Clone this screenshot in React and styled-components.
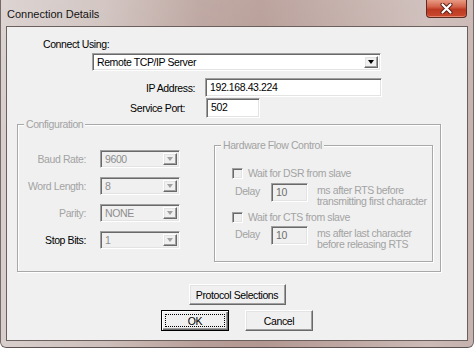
import React from 'react';
import styled, { createGlobalStyle, css } from 'styled-components';

const GlobalStyle = createGlobalStyle`
  html, body {
    margin: 0;
    padding: 0;
    background: #ffffff;
  }
  body {
    width: 474px;
    height: 348px;
    overflow: hidden;
    font-family: "Liberation Sans", Arial, sans-serif;
  }
`;

const sunken = css`
  box-sizing: border-box;
  border: 1px solid;
  border-color: #a0a0a0 #ffffff #ffffff #a0a0a0;
  box-shadow: inset 1px 1px 0 #696969, inset -1px -1px 0 #e3e3e3;
`;

const raised = css`
  box-sizing: border-box;
  background: #f0f0f0;
  border: 1px solid;
  border-color: #ffffff #696969 #696969 #ffffff;
  box-shadow: inset -1px -1px 0 #a0a0a0, inset 1px 1px 0 #e3e3e3;
`;

const Window = styled.div`
  width: 474px;
  height: 348px;
  box-sizing: border-box;
  display: flex;
  flex-direction: column;
  border-radius: 0 0 6px 6px;
  background:
    linear-gradient(180deg, rgba(255,255,255,0.12) 0%, rgba(0,0,0,0) 40%),
    linear-gradient(90deg, #d8cfcd 0%, #cdbfbb 22%, #b89f99 42%, #b39791 55%, #c0aaa5 75%, #cbbab6 90%, #c6b2ae 100%);
  box-shadow: inset 1px 0 0 #766967, inset -1px 0 0 #766967, inset 0 -1px 0 #5c5050;
`;

const TitleBar = styled.div`
  flex: none;
  height: 26px;
  display: flex;
  justify-content: space-between;
  align-items: flex-start;
  padding-left: 7px;
`;

const Title = styled.span`
  margin-top: 7px;
  font-size: 11px;
  line-height: 14px;
  color: #141414;
`;

const CloseButton = styled.div`
  width: 41px;
  height: 18px;
  margin-right: 7px;
  box-sizing: border-box;
  display: flex;
  align-items: center;
  justify-content: center;
  border: 1px solid #5f2a20;
  border-top: none;
  border-radius: 0 0 4px 4px;
  background: linear-gradient(180deg, #e89a84 0%, #d4634a 40%, #bd3a22 55%, #c9482d 100%);
  box-shadow: inset 0 -1px 0 rgba(255,190,170,0.5);
`;

const Client = styled.div`
  flex: none;
  height: 315px;
  margin: 0 6px;
  box-sizing: border-box;
  border: 1px solid #6b605e;
  background: #f0f0f0;
  display: flex;
  flex-direction: column;
  font-size: 10.5px;
  letter-spacing: -0.4px;
  color: #000;
`;

const Text = styled.span`
  line-height: 14px;
  white-space: nowrap;
  color: ${(p) => (p.$disabled ? '#a3a3a3' : '#000')};
`;

const ConnectLabel = styled(Text)`
  margin: 10px 0 0 36px;
`;

const Dropdown = styled.div`
  ${sunken};
  margin: 2px 0 0 85px;
  width: 289px;
  height: 18px;
  background: #ffffff;
  display: flex;
  align-items: stretch;
  padding: 2px;
`;

const DropValue = styled.span`
  flex: 1;
  padding-left: 2px;
  line-height: 13px;
  color: ${(p) => (p.$disabled ? '#8e8e8e' : '#000')};
`;

const ArrowButton = styled.div`
  ${raised};
  width: 14px;
  display: flex;
  align-items: center;
  justify-content: center;
`;

const Arrow = styled.div`
  width: 0;
  height: 0;
  border-left: 3.5px solid transparent;
  border-right: 3.5px solid transparent;
  border-top: 4px solid ${(p) => (p.$disabled ? '#a0a0a0' : '#000')};
`;

const FieldRow = styled.div`
  display: flex;
  align-items: center;
  margin-top: ${(p) => p.$top}px;
`;

const RowLabel = styled(Text)`
  flex: none;
  width: ${(p) => p.$width}px;
  margin-right: ${(p) => p.$gap}px;
  text-align: right;
`;

const TextBox = styled.div`
  ${sunken};
  width: ${(p) => p.$width}px;
  height: ${(p) => p.$height}px;
  background: ${(p) => (p.$disabled ? '#f0f0f0' : '#ffffff')};
  color: ${(p) => (p.$disabled ? '#6e6e6e' : '#000')};
  padding: 2px 0 0 4px;
  line-height: 13px;
  flex: none;
`;

const Group = styled.div`
  position: relative;
  box-sizing: border-box;
  flex: none;
  width: ${(p) => p.$width}px;
  height: ${(p) => p.$height}px;
  border: 1px solid #a8a8a8;
  box-shadow: 1px 1px 0 #ffffff, inset 1px 1px 0 #ffffff;
`;

const GroupLegend = styled.span`
  position: absolute;
  top: -8px;
  left: 6px;
  padding: 0 2px;
  background: #f0f0f0;
  line-height: 14px;
  color: #a3a3a3;
  white-space: nowrap;
`;

const ConfigGroup = styled(Group)`
  margin: 6px 0 0 10px;
  display: flex;
  align-items: flex-start;
`;

const SerialGrid = styled.div`
  margin-top: 25px;
  display: grid;
  grid-template-columns: 68px 80px;
  column-gap: 14px;
  row-gap: 9px;
  align-items: center;
`;

const GridLabel = styled(Text)`
  text-align: right;
`;

const Combo = styled.div`
  ${sunken};
  width: 80px;
  height: 18px;
  padding: 2px;
  display: flex;
  align-items: stretch;
  background: #f0f0f0;
`;

const FlowGroup = styled(Group)`
  margin: 20px 0 0 34px;
  padding: 20px 0 0 17px;
  display: flex;
  flex-direction: column;
`;

const CheckRow = styled.div`
  display: flex;
  align-items: center;
  height: 14px;
  margin-top: ${(p) => p.$top || 0}px;
`;

const CheckBox = styled.span`
  ${sunken};
  width: 11px;
  height: 11px;
  margin-right: 5px;
  background: #f0f0f0;
`;

const DelayRow = styled.div`
  display: flex;
  align-items: flex-start;
  padding-left: 3px;
  margin-top: ${(p) => p.$top}px;
`;

const DelayLabel = styled(Text)`
  width: 36px;
  margin-top: 1px;
  flex: none;
`;

const DelayNote = styled.div`
  margin: 2px 0 0 9px;
  line-height: 11px;
  color: #a3a3a3;
  white-space: nowrap;
`;

const Buttons = styled.div`
  display: flex;
  flex-direction: column;
  align-items: center;
  margin-top: 12px;
`;

const ButtonRow = styled.div`
  display: flex;
  gap: 16px;
  margin-top: 5px;
`;

const PushButton = styled.div`
  ${raised};
  position: relative;
  width: ${(p) => p.$width}px;
  height: 21px;
  display: flex;
  align-items: center;
  justify-content: center;
  line-height: 14px;
  color: #000;
  ${(p) =>
    p.$default &&
    css`
      border-color: #000;
      box-shadow: inset 1px 1px 0 #ffffff, inset -1px -1px 0 #696969, inset -2px -2px 0 #a0a0a0;
      &::after {
        content: '';
        position: absolute;
        inset: 3px;
        border: 1px dotted #000;
      }
    `}
`;

const SelectBox = ({ value, disabled }) => (
  <Combo>
    <DropValue $disabled={disabled}>{value}</DropValue>
    <ArrowButton>
      <Arrow $disabled={disabled} />
    </ArrowButton>
  </Combo>
);

const serial = [
  { label: 'Baud Rate:', value: '9600', dim: true },
  { label: 'Word Length:', value: '8', dim: true },
  { label: 'Parity:', value: 'NONE', dim: true },
  { label: 'Stop Bits:', value: '1', dim: false },
];

export default function App() {
  return (
    <>
      <GlobalStyle />
      <Window>
        <TitleBar>
          <Title>Connection Details</Title>
          <CloseButton>
            <svg width="13" height="11" viewBox="0 0 13 11">
              <path d="M2.5 1.5 L10.5 9.5 M10.5 1.5 L2.5 9.5" stroke="#5a1c12" strokeWidth="4" strokeLinecap="round" />
              <path d="M2.5 1.5 L10.5 9.5 M10.5 1.5 L2.5 9.5" stroke="#ffffff" strokeWidth="2.2" strokeLinecap="round" />
            </svg>
          </CloseButton>
        </TitleBar>

        <Client>
          <ConnectLabel>Connect Using:</ConnectLabel>
          <Dropdown>
            <DropValue>Remote TCP/IP Server</DropValue>
            <ArrowButton>
              <Arrow />
            </ArrowButton>
          </Dropdown>

          <FieldRow $top={7}>
            <RowLabel $width={188} $gap={10}>IP Address:</RowLabel>
            <TextBox $width={177} $height={19}>192.168.43.224</TextBox>
          </FieldRow>
          <FieldRow $top={1}>
            <RowLabel $width={178} $gap={21}>Service Port:</RowLabel>
            <TextBox $width={54} $height={20}>502</TextBox>
          </FieldRow>

          <ConfigGroup $width={424} $height={148}>
            <GroupLegend>Configuration</GroupLegend>
            <SerialGrid>
              {serial.map((row) => (
                <React.Fragment key={row.label}>
                  <GridLabel $disabled={row.dim}>{row.label}</GridLabel>
                  <SelectBox value={row.value} disabled />
                </React.Fragment>
              ))}
            </SerialGrid>

            <FlowGroup $width={219} $height={117}>
              <GroupLegend>Hardware Flow Control</GroupLegend>
              <CheckRow>
                <CheckBox />
                <Text $disabled>Wait for DSR from slave</Text>
              </CheckRow>
              <DelayRow $top={3}>
                <DelayLabel $disabled>Delay</DelayLabel>
                <TextBox $width={37} $height={19} $disabled>10</TextBox>
                <DelayNote>
                  ms after RTS before
                  <br />
                  transmitting first character
                </DelayNote>
              </DelayRow>
              <CheckRow $top={3}>
                <CheckBox />
                <Text $disabled>Wait for CTS from slave</Text>
              </CheckRow>
              <DelayRow $top={2}>
                <DelayLabel $disabled>Delay</DelayLabel>
                <TextBox $width={37} $height={19} $disabled>10</TextBox>
                <DelayNote>
                  ms after last character
                  <br />
                  before releasing RTS
                </DelayNote>
              </DelayRow>
            </FlowGroup>
          </ConfigGroup>

          <Buttons>
            <PushButton $width={97}>Protocol Selections</PushButton>
            <ButtonRow>
              <PushButton $width={68} $default>OK</PushButton>
              <PushButton $width={68}>Cancel</PushButton>
            </ButtonRow>
          </Buttons>
        </Client>
      </Window>
    </>
  );
}
